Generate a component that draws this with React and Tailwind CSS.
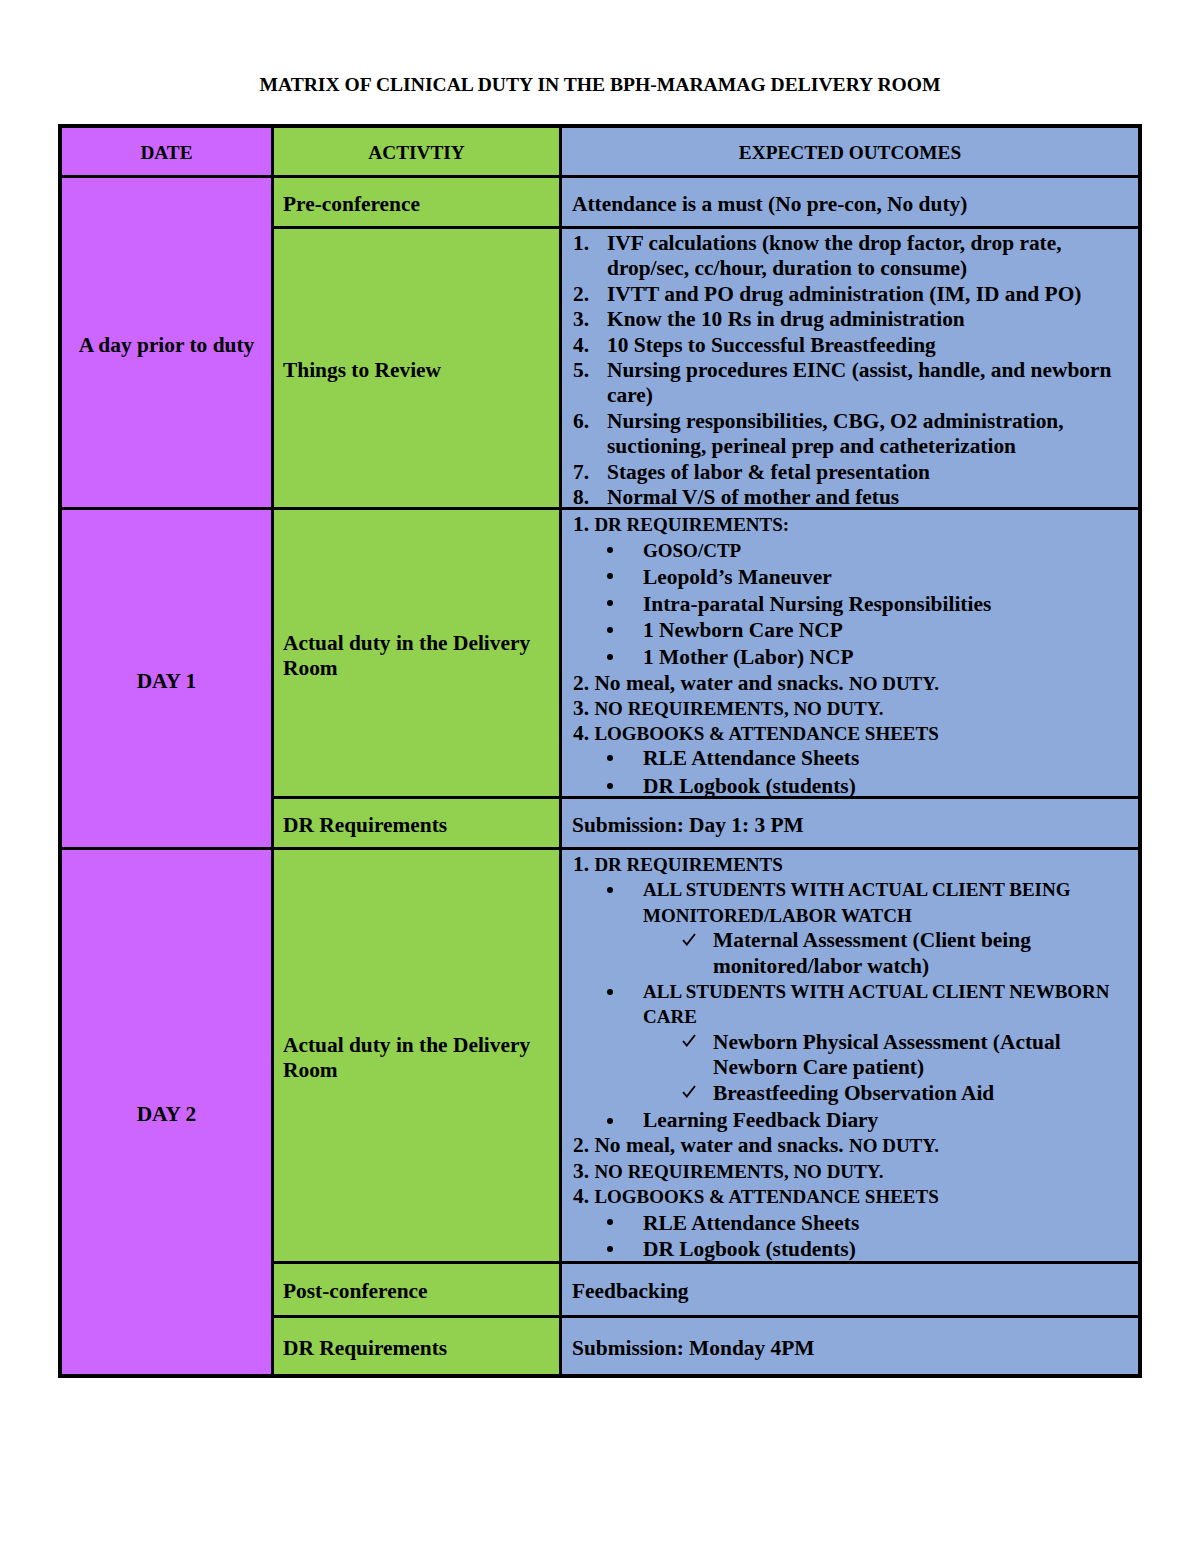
import React from "react";

const font = { fontFamily: '"Liberation Serif", "Times New Roman", serif' };

const Caps = ({ children }) => <span className="text-[19px] leading-none">{children}</span>;

const Dot = () => <span className="block w-[6px] h-[6px] rounded-full bg-black" />;

const Check = () => (
  <svg width="14" height="13" viewBox="0 0 14 13" className="block">
    <path d="M1 7 L4.8 11.5 L13 1" fill="none" stroke="black" strokeWidth="1.9" />
  </svg>
);

const Item = ({ n, children }) => (
  <div className="flex leading-[25.4px] whitespace-nowrap">
    <span className="w-[34px] shrink-0">{n}.</span>
    <div>{children}</div>
  </div>
);

const Bullet = ({ lh = "leading-[25.4px]", extra = "", children }) => (
  <div className={`flex whitespace-nowrap ${lh} ${extra}`}>
    <span className="w-[70px] shrink-0 pl-[34px] h-[25.4px] flex items-center">
      <Dot />
    </span>
    <div>{children}</div>
  </div>
);

const Tick = ({ children }) => (
  <div className="flex whitespace-nowrap leading-[25.4px]">
    <span className="w-[140px] shrink-0 pl-[109px] h-[22px] flex items-center">
      <Check />
    </span>
    <div>{children}</div>
  </div>
);

const Line = ({ children, h = "leading-[25px]" }) => (
  <div className={`whitespace-nowrap ${h}`}>{children}</div>
);

export default function App() {
  return (
    <div className="w-[1200px] h-[1553px] bg-white text-black font-bold" style={font}>
      <div className="pt-[73px] text-center text-[19.6px] leading-[24px]">
        MATRIX OF CLINICAL DUTY IN THE BPH-MARAMAG DELIVERY ROOM
      </div>

      <div className="ml-[58px] mt-[27px] w-[1084px] bg-black p-[4px] grid grid-cols-[209px_285px_576px] grid-rows-[47px_48px_278px_286px_48px_411px_51px_56px] gap-[3px] text-[21.4px]">
        {/* header */}
        <div className="col-start-1 row-start-1 bg-[#cc66ff] flex items-center justify-center pt-[4px] text-[19.3px]">
          DATE
        </div>
        <div className="col-start-2 row-start-1 bg-[#92d050] flex items-center justify-center pt-[4px] text-[19.3px]">
          ACTIVTIY
        </div>
        <div className="col-start-3 row-start-1 bg-[#8eaadb] flex items-center justify-center pt-[4px] text-[19.3px]">
          EXPECTED OUTCOMES
        </div>

        {/* date column */}
        <div className="col-start-1 row-start-2 row-span-2 bg-[#cc66ff] flex items-center justify-center pt-[5px]">
          A day prior to duty
        </div>
        <div className="col-start-1 row-start-4 row-span-2 bg-[#cc66ff] flex items-center justify-center pt-[5px]">
          DAY 1
        </div>
        <div className="col-start-1 row-start-6 row-span-3 bg-[#cc66ff] flex items-center justify-center pt-[4px]">
          DAY 2
        </div>

        {/* activity column */}
        <div className="col-start-2 row-start-2 bg-[#92d050] flex items-center pl-[9px] pt-[4px]">Pre-conference</div>
        <div className="col-start-2 row-start-3 bg-[#92d050] flex items-center pl-[9px] pt-[4px]">Things to Review</div>
        <div className="col-start-2 row-start-4 bg-[#92d050] flex items-center pl-[9px] pt-[5px] leading-[25px]">
          <div>
            Actual duty in the Delivery
            <br />
            Room
          </div>
        </div>
        <div className="col-start-2 row-start-5 bg-[#92d050] flex items-center pl-[9px] pt-[4px]">DR Requirements</div>
        <div className="col-start-2 row-start-6 bg-[#92d050] flex items-center pl-[9px] pt-[5px] leading-[25px]">
          <div>
            Actual duty in the Delivery
            <br />
            Room
          </div>
        </div>
        <div className="col-start-2 row-start-7 bg-[#92d050] flex items-center pl-[9px] pt-[4px]">Post-conference</div>
        <div className="col-start-2 row-start-8 bg-[#92d050] flex items-center pl-[9px] pt-[4px]">DR Requirements</div>

        {/* outcomes column */}
        <div className="col-start-3 row-start-2 bg-[#8eaadb] flex items-center pl-[10px] pt-[4px]">
          Attendance is a must (No pre-con, No duty)
        </div>

        <div className="col-start-3 row-start-3 bg-[#8eaadb] pl-[11px] pt-[2px]">
          <Item n="1">
            IVF calculations (know the drop factor, drop rate,
            <br />
            drop/sec, cc/hour, duration to consume)
          </Item>
          <Item n="2">IVTT and PO drug administration (IM, ID and PO)</Item>
          <Item n="3">Know the 10 Rs in drug administration</Item>
          <Item n="4">10 Steps to Successful Breastfeeding</Item>
          <Item n="5">
            Nursing procedures EINC (assist, handle, and newborn
            <br />
            care)
          </Item>
          <Item n="6">
            Nursing responsibilities, CBG, O2 administration,
            <br />
            suctioning, perineal prep and catheterization
          </Item>
          <Item n="7">Stages of labor &amp; fetal presentation</Item>
          <Item n="8">Normal V/S of mother and fetus</Item>
        </div>

        <div className="col-start-3 row-start-4 bg-[#8eaadb] pl-[11px] pt-[2px]">
          <Line>
            1. <Caps>DR REQUIREMENTS:</Caps>
          </Line>
          <Bullet lh="leading-[26.8px]"><Caps>GOSO/CTP</Caps></Bullet>
          <Bullet lh="leading-[26.8px]">Leopold’s Maneuver</Bullet>
          <Bullet lh="leading-[26.8px]">Intra-paratal Nursing Responsibilities</Bullet>
          <Bullet lh="leading-[26.8px]">1 Newborn Care NCP</Bullet>
          <Bullet lh="leading-[26.8px]">1 Mother (Labor) NCP</Bullet>
          <Line h="leading-[24.8px]">
            2. No meal, water and snacks. <Caps>NO DUTY.</Caps>
          </Line>
          <Line h="leading-[24.8px]">
            3. <Caps>NO REQUIREMENTS, NO DUTY.</Caps>
          </Line>
          <Line h="leading-[24.8px]">
            4. <Caps>LOGBOOKS &amp; ATTENDANCE SHEETS</Caps>
          </Line>
          <Bullet lh="leading-[27.6px]">RLE Attendance Sheets</Bullet>
          <Bullet lh="leading-[27.6px]">DR Logbook (students)</Bullet>
        </div>

        <div className="col-start-3 row-start-5 bg-[#8eaadb] flex items-center pl-[10px] pt-[4px]">
          Submission: Day 1: 3 PM
        </div>

        <div className="col-start-3 row-start-6 bg-[#8eaadb] pl-[11px] pt-[2px]">
          <Line h="leading-[25.4px]">
            1. <Caps>DR REQUIREMENTS</Caps>
          </Line>
          <Bullet>
            <Caps>
              ALL STUDENTS WITH ACTUAL CLIENT BEING
              <br />
              MONITORED/LABOR WATCH
            </Caps>
          </Bullet>
          <Tick>
            Maternal Assessment (Client being
            <br />
            monitored/labor watch)
          </Tick>
          <Bullet>
            <Caps>
              ALL STUDENTS WITH ACTUAL CLIENT NEWBORN
              <br />
              CARE
            </Caps>
          </Bullet>
          <Tick>
            Newborn Physical Assessment (Actual
            <br />
            Newborn Care patient)
          </Tick>
          <Tick>Breastfeeding Observation Aid</Tick>
          <Bullet extra="pt-[2px]">Learning Feedback Diary</Bullet>
          <Line h="leading-[25.4px]">
            2. No meal, water and snacks. <Caps>NO DUTY.</Caps>
          </Line>
          <Line h="leading-[25.4px]">
            3. <Caps>NO REQUIREMENTS, NO DUTY.</Caps>
          </Line>
          <Line h="leading-[25.4px]">
            4. <Caps>LOGBOOKS &amp; ATTENDANCE SHEETS</Caps>
          </Line>
          <Bullet lh="leading-[26.6px]">RLE Attendance Sheets</Bullet>
          <Bullet lh="leading-[26.6px]">DR Logbook (students)</Bullet>
        </div>

        <div className="col-start-3 row-start-7 bg-[#8eaadb] flex items-center pl-[10px] pt-[4px]">Feedbacking</div>
        <div className="col-start-3 row-start-8 bg-[#8eaadb] flex items-center pl-[10px] pt-[4px]">
          Submission: Monday 4PM
        </div>
      </div>
    </div>
  );
}
